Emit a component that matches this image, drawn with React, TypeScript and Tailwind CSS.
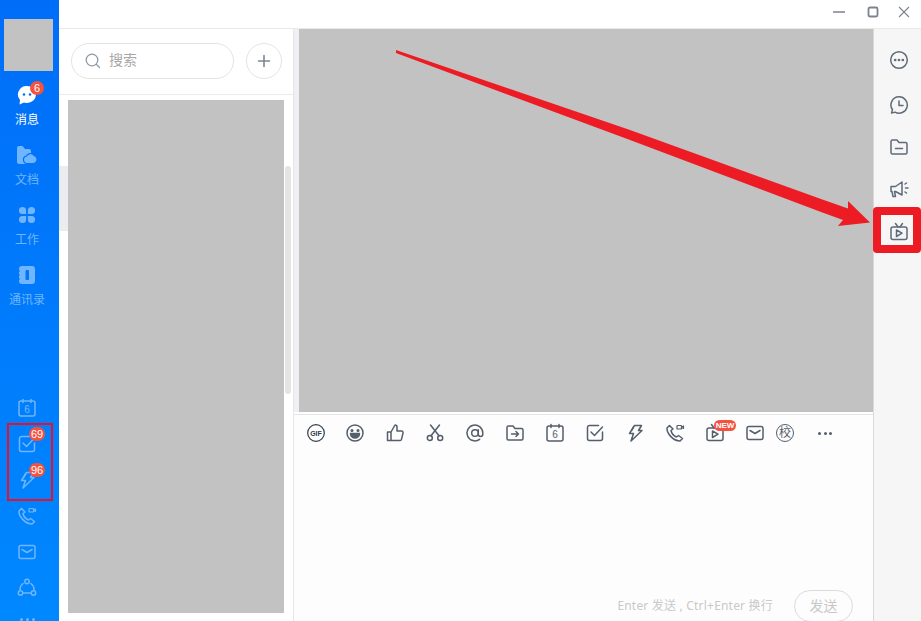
import type { ReactNode } from "react";

const cjk = "font-['Liberation_Sans','Noto_Sans_CJK_SC',sans-serif]";

function Line({ size = 20, className = "", children }: { size?: number; className?: string; children: ReactNode }) {
  return (
    <svg
      width={size}
      height={size}
      viewBox="0 0 20 20"
      fill="none"
      stroke="currentColor"
      strokeWidth="1.5"
      strokeLinecap="round"
      strokeLinejoin="round"
      className={className}
    >
      {children}
    </svg>
  );
}

const CalendarIcon = () => (
  <Line>
    <rect x="2" y="3" width="16" height="15" rx="2" />
    <path d="M6 1.500v3M14 1.500v3" />
    <text x="10" y="15" fontSize="10" textAnchor="middle" fill="currentColor" stroke="none" fontFamily="Liberation Sans">6</text>
  </Line>
);
const TodoIcon = () => (
  <Line>
    <path d="M17.500 9v6.500a2 2 0 0 1-2 2h-11a2 2 0 0 1-2-2v-11a2 2 0 0 1 2-2h9" />
    <path d="M6 9l3.500 3.500L17.500 4" />
  </Line>
);
const FlashIcon = () => (
  <Line>
    <path d="M9.500 2.500h7l-3 5h3.500L6 18l2.500-7.500H4.500z" />
    <path d="M7 7l1.500-3" />
  </Line>
);
const PhoneIcon = () => (
  <Line>
    <path d="M4.500 2.500L2 5c-.5 5 6 13 13 13l2.500-2.500-4-3-2 1.500c-2.500-1-5-4-5.500-6.500L8 6z" />
    <rect x="12" y="2.500" width="4.500" height="3.500" rx=".6" strokeWidth="1.200" />
    <path d="M16.500 4l2-1v2.500l-2-1" strokeWidth="1.200" />
  </Line>
);
const MailIcon = () => (
  <Line>
    <rect x="2" y="3.500" width="16" height="13" rx="2" />
    <path d="M5 7.500l5 3 5-3" />
  </Line>
);
const ShareIcon = () => (
  <Line>
    <circle cx="10" cy="3.500" r="2.200" />
    <circle cx="3.500" cy="15" r="2.200" />
    <circle cx="16.500" cy="15" r="2.200" />
    <path d="M6.500 15h7M6 5.500A8 8 0 0 0 3 12M14 5.500A8 8 0 0 1 17 12" />
  </Line>
);
const TvIcon = () => (
  <Line>
    <rect x="2" y="5" width="16" height="12.500" rx="2" />
    <path d="M6.500 1.500L9 5M13.500 1.500L11 5" />
    <path d="M7.500 8l5.500 3.200-5.500 3.300z" />
  </Line>
);

function NavItem({ label, active, icon, badge }: { label: string; active?: boolean; icon: ReactNode; badge?: string }) {
  return (
    <div className={`flex h-[60px] flex-col items-center ${active ? "text-white" : "text-[#70b5ff]"}`}>
      <div className="relative mt-[7px] flex h-[24px] w-[24px] items-center justify-center">
        {icon}
        {badge && (
          <span className="absolute right-[-5px] top-[-2px] flex h-[14px] w-[14px] items-center justify-center rounded-full bg-[#f4523f] text-[11px] leading-none text-white">
            {badge}
          </span>
        )}
      </div>
      <span className="mt-[5px] text-[12px] leading-[16px]">{label}</span>
    </div>
  );
}

function RailIcon({ icon, badge }: { icon: ReactNode; badge?: string }) {
  return (
    <div className="relative flex h-[36px] w-full items-center justify-center text-[#70b5ff]">
      {icon}
      {badge && (
        <span className="absolute left-[29px] top-[1px] flex h-[14px] w-[16px] items-center justify-center rounded-full bg-[#f4523f] text-[11px] leading-none text-white">
          {badge}
        </span>
      )}
    </div>
  );
}

function Sidebar() {
  return (
    <aside className="relative flex h-full w-[59px] shrink-0 flex-col bg-linear-to-b from-[#006df8] to-[#0088ff] pt-[19px]">
      <div className="mx-[4px] h-[52px] w-[49px] bg-[#c2c2c2]" />
      <div className="mt-[5px] flex flex-col pr-[5px]">
        <NavItem
          label="消息"
          active
          badge="6"
          icon={
            <svg width="20" height="20" viewBox="0 0 20 20">
              <path d="M10 1a9 8.500 0 0 1 0 17c-1.500 0-2-.3-3-.5L2.500 19.500l.5-4.500A8.500 8.500 0 0 1 10 1z" fill="#fff" />
              <circle cx="7" cy="9.500" r="1.300" fill="#0070f5" />
              <circle cx="13" cy="9.500" r="1.300" fill="#0070f5" />
            </svg>
          }
        />
        <NavItem
          label="文档"
          icon={
            <svg width="20" height="20" viewBox="0 0 20 20">
              <path d="M0 3a2 2 0 0 1 2-2h3.500l2.500 3h4a2 2 0 0 1 2 2v11a2 2 0 0 1-2 2H2a2 2 0 0 1-2-2z" fill="#70b5ff" />
              <path d="M10 18.500a3.800 3.800 0 0 1-.6-7.500A4.500 4.500 0 0 1 17 10.300a4.200 4.200 0 0 1-.5 8.200z" fill="#70b5ff" stroke="#0074f9" strokeWidth="1.200" />
            </svg>
          }
        />
        <NavItem
          label="工作"
          icon={
            <svg width="18" height="18" viewBox="0 0 20 20" fill="#70b5ff">
              <path d="M5 1a4 4 0 0 1 4 4v4H5A4 4 0 0 1 5 1zM15 1a4 4 0 0 0-4 4v4h4a4 4 0 0 0 0-8zM5 19a4 4 0 0 0 4-4v-4H5a4 4 0 0 0 0 8zM15 19a4 4 0 0 1-4-4v-4h4a4 4 0 0 1 0 8z" />
            </svg>
          }
        />
        <NavItem
          label="通讯录"
          icon={
            <svg width="20" height="20" viewBox="0 0 20 20">
              <rect x="2" y="1" width="16" height="18" rx="3" fill="#70b5ff" />
              <rect x="8.500" y="5" width="3.500" height="10" rx="1" fill="#0076f8" />
              <path d="M1.500 6h1.500M1.500 10h1.500M1.500 14h1.500" stroke="#0076f8" strokeWidth="1.200" />
            </svg>
          }
        />
      </div>
      <div className="mt-auto mb-[-13px] flex flex-col pr-[5px]">
        <RailIcon icon={<CalendarIcon />} />
        <RailIcon icon={<TodoIcon />} badge="69" />
        <RailIcon icon={<FlashIcon />} badge="96" />
        <RailIcon icon={<PhoneIcon />} />
        <RailIcon icon={<MailIcon />} />
        <RailIcon icon={<ShareIcon />} />
        <div className="flex h-[28px] justify-center gap-[3px] pt-[12px]">
          <i className="h-[3px] w-[3px] rounded-full bg-[#70b5ff]" />
          <i className="h-[3px] w-[3px] rounded-full bg-[#70b5ff]" />
          <i className="h-[3px] w-[3px] rounded-full bg-[#70b5ff]" />
        </div>
      </div>
      <div className="absolute left-[7px] top-[423px] h-[78px] w-[46px] border-2 border-[#e8112d]" />
    </aside>
  );
}

function ListPanel() {
  return (
    <section className="flex h-full w-[234px] shrink-0 flex-col bg-white">
      <div className="flex h-[66px] shrink-0 items-center border-b border-[#ebebeb] pb-[2px] pl-[12px] pr-[11px]">
        <div className="flex h-[36px] w-[163px] items-center rounded-full border border-[#e3e3e3] pl-[13px]">
          <svg width="16" height="16" viewBox="0 0 16 16" fill="none" stroke="#8f9aa6" strokeWidth="1.300" strokeLinecap="round">
            <circle cx="7" cy="7" r="5.800" />
            <path d="M11.500 11.500l3 3" />
          </svg>
          <span className="ml-[8px] text-[14px] text-[#a8a8a8]">搜索</span>
        </div>
        <div className="ml-auto flex h-[36px] w-[36px] items-center justify-center rounded-full border border-[#e3e3e3]">
          <svg width="14" height="14" viewBox="0 0 14 14" stroke="#7f8791" strokeWidth="1.600" strokeLinecap="round">
            <path d="M7 1.500v11M1.500 7h11" />
          </svg>
        </div>
      </div>
      <div className="relative flex min-h-0 flex-1 pl-[9px] pt-[5px]">
        <div className="absolute left-0 top-[71px] h-[65px] w-[9px] bg-[#ebecf0]" />
        <div className="h-[513px] w-[216px] bg-[#c2c2c2]" />
        <div className="ml-[1px] mt-[66px] h-[228px] w-[6px] rounded-full bg-[#e4e4e4]" />
      </div>
    </section>
  );
}

function ToolIcon({ children, className = "w-10" }: { children: ReactNode; className?: string }) {
  return <div className={`relative flex h-[20px] items-center justify-center ${className}`}>{children}</div>;
}

function Toolbar() {
  return (
    <div className="flex shrink-0 items-center pl-[1px] pt-[8px] text-[#555e6b]">
      <ToolIcon>
        <svg width="20" height="20" viewBox="0 0 20 20" fill="none" stroke="#333b4a" strokeWidth="1.200" className="ml-[2px]">
          <circle cx="10" cy="10" r="8.300" />
          <text x="10" y="12.700" fontSize="7" fontWeight="700" textAnchor="middle" fill="#333b4a" stroke="none" fontFamily="Liberation Sans">GIF</text>
        </svg>
      </ToolIcon>
      <ToolIcon>
        <Line>
          <circle cx="10" cy="10" r="8" />
          <circle cx="7" cy="7.500" r=".8" fill="currentColor" />
          <circle cx="13" cy="7.500" r=".8" fill="currentColor" />
          <path d="M5.500 10.500h9a4.500 4.500 0 0 1-9 0z" fill="currentColor" />
        </Line>
      </ToolIcon>
      <ToolIcon>
        <Line>
          <path d="M6 9h-3.500v8.500H15a1.500 1.500 0 0 0 1.500-1.200L18 10a1.500 1.500 0 0 0-1.500-2H12V4a2 2 0 0 0-2-2L6 9v8.500" />
        </Line>
      </ToolIcon>
      <ToolIcon>
        <Line>
          <circle cx="4.800" cy="15" r="2.500" />
          <circle cx="15.200" cy="15" r="2.500" />
          <path d="M6 12.800L14.500 2M14 12.800L5.500 2" />
        </Line>
      </ToolIcon>
      <ToolIcon>
        <Line>
          <circle cx="10" cy="10" r="3.300" />
          <path d="M13.300 6.700v4.500a2.200 2.200 0 0 0 4.500 0V10a7.900 7.900 0 1 0-3.200 6.300" />
        </Line>
      </ToolIcon>
      <ToolIcon>
        <Line>
          <path d="M2 4.500A1.500 1.500 0 0 1 3.500 3H8l2 2.500h6.500A1.500 1.500 0 0 1 18 7v8.500a1.500 1.500 0 0 1-1.500 1.500h-13A1.500 1.500 0 0 1 2 15.500z" />
          <path d="M6.500 11h7M11 8.500l2.500 2.500-2.500 2.500" />
        </Line>
      </ToolIcon>
      <ToolIcon><CalendarIcon /></ToolIcon>
      <ToolIcon><TodoIcon /></ToolIcon>
      <ToolIcon><FlashIcon /></ToolIcon>
      <ToolIcon><PhoneIcon /></ToolIcon>
      <ToolIcon>
        <TvIcon />
        <span className="absolute left-[19px] top-[-3px] flex h-[11px] w-[22px] items-center justify-center rounded-full bg-[#f4523f] text-[8px] font-bold leading-none text-white">
          NEW
        </span>
      </ToolIcon>
      <ToolIcon><MailIcon /></ToolIcon>
      <ToolIcon className="w-[20px]">
        <span className="flex h-[18px] w-[18px] shrink-0 items-center justify-center rounded-full border border-[#555e6b] text-[12px] leading-none">校</span>
      </ToolIcon>
      <ToolIcon className="ml-[10px] w-10">
        <div className="flex gap-[2.500px]">
          <i className="h-[3px] w-[3px] rounded-full bg-[#555e6b]" />
          <i className="h-[3px] w-[3px] rounded-full bg-[#555e6b]" />
          <i className="h-[3px] w-[3px] rounded-full bg-[#555e6b]" />
        </div>
      </ToolIcon>
    </div>
  );
}

function MainPanel() {
  return (
    <section className="flex h-full min-w-0 flex-1 flex-col border-l border-[#e6e6e6] bg-[#fdfdfd]">
      <div className="flex h-[383px] shrink-0 bg-[#eef0f3] pl-[5px]">
        <div className="flex-1 bg-[#c2c2c2]" />
      </div>
      <div className="h-[2px] shrink-0 bg-white" />
      <div className="h-[1px] shrink-0 bg-[#e4e4e4]" />
      <Toolbar />
      <div className="mt-auto mb-[-1px] flex items-center justify-end pr-[20px]">
        <span className="font-['Noto_Sans','Noto_Sans_CJK_SC',sans-serif] text-[12px] tracking-[0.2px] text-[#c9c9c9]">Enter 发送 , Ctrl+Enter 换行</span>
        <div className="ml-[21px] flex h-[32px] w-[59px] items-center justify-center rounded-full border border-[#dcdcdc] text-[14px] text-[#c8c8c8]">
          发送
        </div>
      </div>
    </section>
  );
}

function RightRail() {
  return (
    <aside className="flex h-full w-[48px] shrink-0 flex-col items-center border-l border-[#d9d9d9] bg-[#f6f6f6] pl-[3px] pt-[21px] text-[#5f6b78]">
      <Line>
        <circle cx="10" cy="10" r="8.300" />
        <circle cx="6.200" cy="10" r=".6" fill="currentColor" />
        <circle cx="10" cy="10" r=".6" fill="currentColor" />
        <circle cx="13.800" cy="10" r=".6" fill="currentColor" />
      </Line>
      <Line className="mt-[25px]">
        <path d="M10 1.800a8.200 8.200 0 1 1-4 15.300l-3.500 1 1-3.300A8.200 8.200 0 0 1 10 1.800z" />
        <path d="M10 6v4.500h4" />
      </Line>
      <Line className="mt-[22px]">
        <path d="M2 4.500A1.500 1.500 0 0 1 3.500 3H8l2 2.500h6.500A1.500 1.500 0 0 1 18 7v8.500a1.500 1.500 0 0 1-1.500 1.500h-13A1.500 1.500 0 0 1 2 15.500z" />
        <path d="M6.500 11.500h7" />
      </Line>
      <Line className="mt-[22px]">
        <path d="M2 7.500h4.500L13 3v13l-6.500-3.500H5.500L6.500 17.500H4L3 12.500H2z" />
        <path d="M16 5l1.500-1M16.500 9H19M16 13l1.500 1" />
      </Line>
      <div className="mt-[23px]"><TvIcon /></div>
    </aside>
  );
}

export default function App() {
  return (
    <div className={`relative flex h-[621px] w-[921px] flex-col overflow-hidden bg-white ${cjk}`}>
      <div className="flex min-h-0 flex-1">
        <Sidebar />
        <div className="flex min-w-0 flex-1 flex-col">
          <header className="flex h-[29px] shrink-0 items-start justify-end border-b border-[#e9e9e9] pr-[11px] pt-[6px] text-[#7c838c]">
            <svg width="12" height="12" viewBox="0 0 12 12" stroke="currentColor" strokeWidth="1.500"><path d="M0 6h12" /></svg>
            <svg width="12" height="12" viewBox="0 0 12 12" fill="none" stroke="currentColor" strokeWidth="1.800" className="ml-[22px]"><rect x="1.500" y="1.500" width="9" height="9" rx="1.500" /></svg>
            <svg width="12" height="12" viewBox="0 0 12 12" stroke="currentColor" strokeWidth="1.100" className="ml-[19px]"><path d="M1 1l10 10M11 1L1 11" /></svg>
          </header>
          <div className="flex min-h-0 flex-1">
            <ListPanel />
            <MainPanel />
            <RightRail />
          </div>
        </div>
      </div>
      <svg className="pointer-events-none absolute left-0 top-0" width="921" height="621" viewBox="0 0 921 621">
        <polygon points="396,50 630,130 821,199 848,208.500 848,201 870,222.500 838,226 843,220 821,212 630,140 396,53" fill="#ed1c24" />
      </svg>
      <div className="pointer-events-none absolute left-[873px] top-[207px] h-[46px] w-[48px] rounded-[4px] border-[8px] border-[#ed1c24]" />
    </div>
  );
}
